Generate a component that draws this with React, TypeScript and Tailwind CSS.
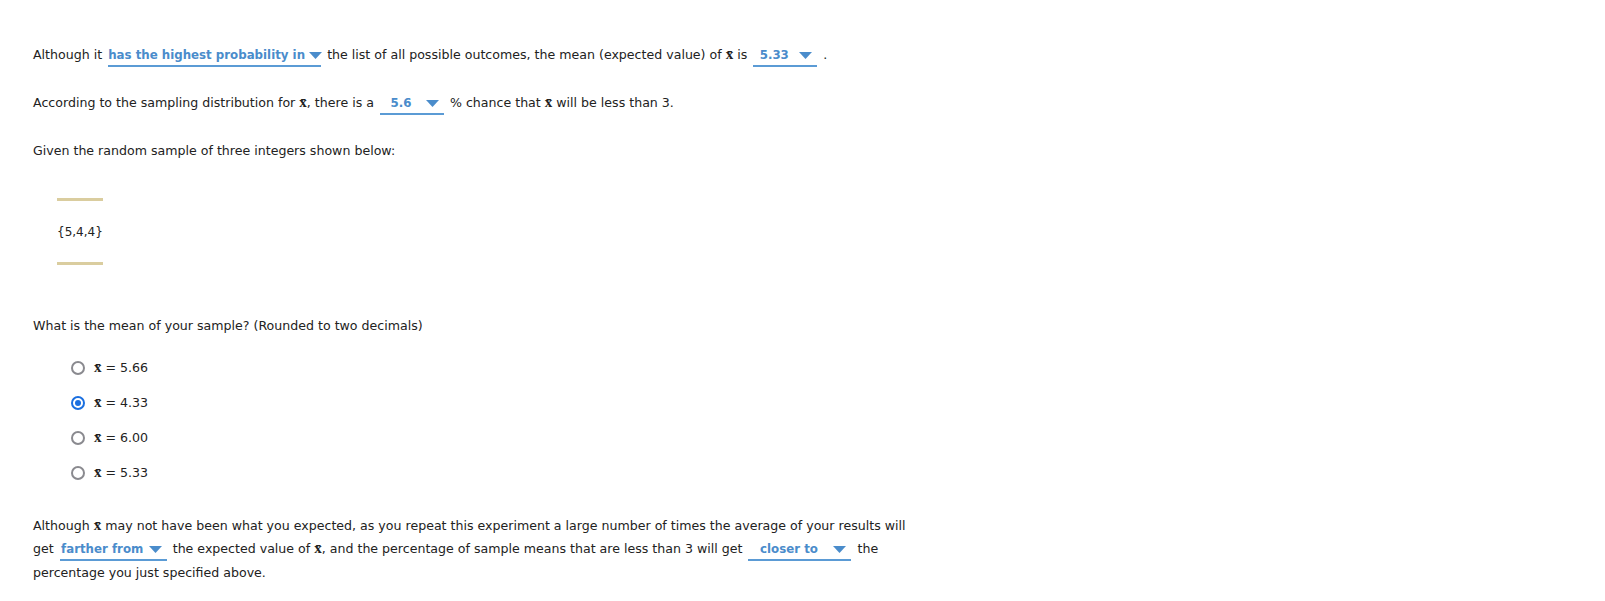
import React from 'react';

const Xbar = () => (
  <span className="font-bold text-[15px] leading-[0]" style={{ fontFamily: '"Liberation Serif", serif' }}>
    x̄
  </span>
);

const Caret = () => (
  <svg width="13" height="7" viewBox="0 0 13 7" className="shrink-0 self-center">
    <polygon points="0,0 13,0 6.5,7" fill="#4a8ccb" />
  </svg>
);

const Dropdown = ({ value, width }: { value: string; width: string }) => (
  <span
    className={`inline-flex items-baseline gap-[4px] border-b-2 border-[#5b9bd5] mx-[2px] pb-[1px] leading-[17px] whitespace-nowrap ${width}`}
  >
    <span className="flex-1 text-center font-bold text-[11.8px] text-[#4a8ccb]">{value}</span>
    <Caret />
    <span className="w-[1px]" />
  </span>
);

const Radio = ({ checked }: { checked?: boolean }) =>
  checked ? (
    <span className="w-[14px] h-[14px] rounded-full border-2 border-[#1a6fe0] flex items-center justify-center">
      <span className="w-[6px] h-[6px] rounded-full bg-[#1a6fe0]" />
    </span>
  ) : (
    <span className="w-[14px] h-[14px] rounded-full border-2 border-[#8a8a8f]" />
  );

export default function App() {
  const options = [
    { v: '5.66' },
    { v: '4.33', checked: true },
    { v: '6.00' },
    { v: '5.33' },
  ];

  return (
    <div
      className="w-[1605px] h-[601px] bg-white text-[#222] text-[12.6px] pl-[33px] pt-[45px]"
      style={{ fontFamily: '"DejaVu Sans", Verdana, sans-serif' }}
    >
      <p className="leading-[20px]">
        Although it <Dropdown value="has the highest probability in" width="w-[213px]" /> the list of all
        possible outcomes, the mean (expected value) of <Xbar /> is <Dropdown value="5.33" width="w-[64px]" /> .
      </p>

      <p className="leading-[20px] mt-[26px]">
        According to the sampling distribution for <Xbar />, there is a <Dropdown value="5.6" width="w-[64px]" />{' '}
        % chance that <Xbar /> will be less than 3.
      </p>

      <p className="leading-[20px] mt-[26px]">Given the random sample of three integers shown below:</p>

      <div className="ml-[24px] mt-[37px] w-[46px]">
        <div className="h-[3px] bg-[#dacd9f]" />
        <div className="text-[12px] leading-[16px] mt-[23px] mb-[22px]">{'{5,4,4}'}</div>
        <div className="h-[3px] bg-[#dacd9f]" />
      </div>

      <p className="leading-[20px] mt-[51px]">What is the mean of your sample? (Rounded to two decimals)</p>

      <div className="ml-[38px] mt-[22px] flex flex-col gap-[15px]">
        {options.map((o) => (
          <label key={o.v} className="flex items-center gap-[9px] h-[20px]">
            <Radio checked={o.checked} />
            <span>
              <Xbar /> = {o.v}
            </span>
          </label>
        ))}
      </div>

      <p className="leading-[23px] mt-[31px] w-[900px]">
        Although <Xbar /> may not have been what you expected, as you repeat this experiment a large number of
        times the average of your results will
        <br />
        get <Dropdown value="farther from" width="w-[107px]" /> the expected value of <Xbar />, and the percentage
        of sample means that are less than 3 will get <Dropdown value="closer to" width="w-[103px]" /> the
        <br />
        percentage you just specified above.
      </p>
    </div>
  );
}
